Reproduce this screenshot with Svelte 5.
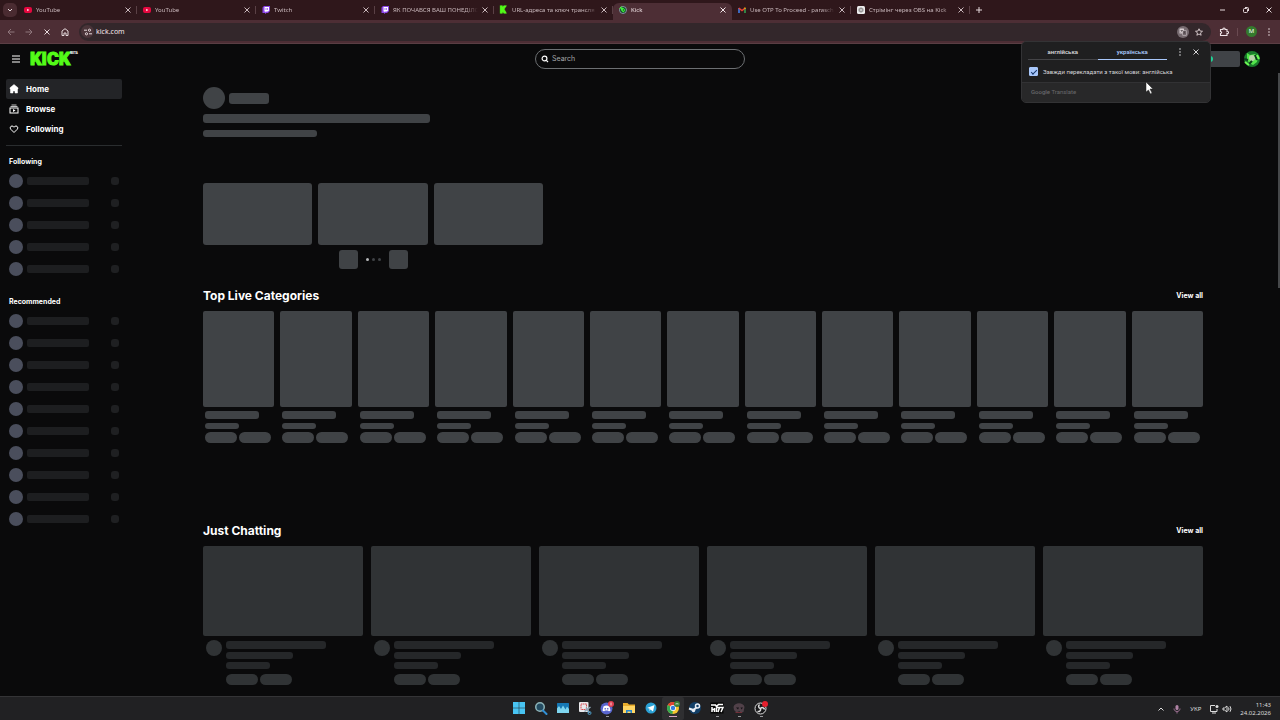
<!--
  Browser window on a desktop: tab strip, toolbar, the kick.com home page in
  its loading state, the translate bubble and the system taskbar.
-->
<script lang="ts">
	interface Tab {
		title: string;
		icon: string;
		active?: boolean;
	}

	const tabs: Tab[] = [
		{ title: 'YouTube', icon: 'youtube' },
		{ title: 'YouTube', icon: 'youtube' },
		{ title: 'Twitch', icon: 'twitch' },
		{ title: 'ЯК ПОЧАВСЯ ВАШ ПОНЕДІЛО', icon: 'twitch' },
		{ title: 'URL-адреса та ключ трансля', icon: 'k' },
		{ title: 'Kick', icon: 'kick', active: true },
		{ title: 'Use OTP To Proceed - parasch', icon: 'gmail' },
		{ title: 'Стрімінг через OBS на Kick', icon: 'gpt' }
	];

	const nav = ['Home', 'Browse', 'Following'];
	const channels = [
		{ label: 'Following', rows: 5 },
		{ label: 'Recommended', rows: 10 }
	];
	const apps = [
		'start', 'search', 'monitor', 'snip', 'discord', 'files',
		'telegram', 'chrome', 'steam', 'game', 'mask', 'obs'
	];
	const running = ['discord', 'game', 'mask', 'obs'];

	let url = $state('kick.com');
	let query = $state('');
	let always = $state(true);
</script>

{#snippet cross()}
	<svg class="i6" viewBox="0 0 6 6" aria-hidden="true"><path class="line" d="M.5.5l5 5M5.500.5l-5 5" /></svg>
{/snippet}

{#snippet favicon(name: string)}
	{#if name === 'k'}
		<span class="fav-k" aria-hidden="true">K</span>
	{:else}
		<svg class="i8" viewBox="0 0 16 16" aria-hidden="true">
			{#if name === 'youtube'}
				<rect y="2" width="16" height="12" rx="4" fill="#e5083f" />
				<path d="M6.5 5.5v5l4-2.5z" fill="#fff" />
			{:else if name === 'twitch'}
				<path d="M4 0h12v10l-4 4H9l-3 2v-2H1V3z" fill="#8b45e8" />
				<path d="M5 2h9v7l-2 2H9l-2 2v-2H5z" fill="#fff" />
				<path d="M8 4v4M11 4v4" stroke="#8b45e8" stroke-width="1.4" />
			{:else if name === 'kick'}
				<circle cx="8" cy="8" r="7" fill="#123b24" stroke="#a5bfd6" stroke-width="1.4" />
				<path d="M2 2l7 2 4 4-4 5-4-3z" fill="#3df23b" />
				<circle cx="9" cy="8" r="1.500" fill="#124a24" />
				<path d="M1 5l4-4" stroke="#56fb3c" stroke-width="2" />
			{:else if name === 'gmail'}
				<path d="M2 14V4" stroke="#4285f4" stroke-width="3" />
				<path d="M14 14V4" stroke="#34a853" stroke-width="3" />
				<path d="M1.500 4L8 9l6.500-5" fill="none" stroke="#ea4335" stroke-width="3" />
				<path d="M13 5l2-1.500" stroke="#fbbc04" stroke-width="3" />
			{:else}
				<rect width="16" height="16" rx="3" fill="#ececec" />
				<g fill="none" stroke="#8a8a8a" stroke-width="1.300">
					<ellipse cx="8" cy="8" rx="2.500" ry="5" />
					<ellipse cx="8" cy="8" rx="2.500" ry="5" transform="rotate(60 8 8)" />
					<ellipse cx="8" cy="8" rx="2.500" ry="5" transform="rotate(120 8 8)" />
				</g>
			{/if}
		</svg>
	{/if}
{/snippet}

{#snippet navIcon(name: string)}
	<svg class="i10" viewBox="0 0 20 20" aria-hidden="true">
		{#if name === 'Home'}
			<path d="M10 1l8 6.500V10h-1v8h-5v-4H8v4H3v-8H2V7.500z" fill="#fff" stroke="#fff" stroke-linejoin="round" />
		{:else if name === 'Browse'}
			<path d="M5 2h10M3 5h14" stroke="#fff" stroke-width="1.500" />
			<rect x="2" y="8" width="16" height="10" fill="none" stroke="#fff" stroke-width="2" />
			<path d="M8 10v6l5-3z" fill="#fff" />
		{:else}
			<path d="M10 17L3.500 10.500C1 7.500 3 4 6 4c2 0 3.200 1 4 2.500C10.800 5 12 4 14 4c3 0 5 3.500 2.500 6.500z" fill="none" stroke="#fff" stroke-width="2" stroke-linejoin="round" />
		{/if}
	</svg>
{/snippet}

{#snippet appIcon(name: string)}
	<svg class="i14" viewBox="0 0 28 28" aria-hidden="true">
		{#if name === 'start'}
			<path d="M2 2h11.500v11.500H2zM14.500 2H26v11.500H14.500zM2 14.500h11.500V26H2zM14.500 14.500H26V26H14.500z" fill="#48c4f3" />
		{:else if name === 'search'}
			<circle cx="12" cy="12" r="8.500" fill="#244c62" stroke="#8db4b9" stroke-width="3" />
			<path d="M18 19l7 7" stroke="#318fd4" stroke-width="4" stroke-linecap="round" />
		{:else if name === 'monitor'}
			<rect x="2" y="4" width="24" height="20" rx="1" fill="#1678b4" />
			<path d="M2 20V15l4-5 4 6 4-7 5 8 3-6 4 5v8H2z" fill="#7ed5ef" />
		{:else if name === 'snip'}
			<rect x="2" y="2" width="19" height="20" rx="2" fill="#e9e9ec" />
			<rect x="6" y="6" width="11" height="11" fill="none" stroke="#d64a52" stroke-width="2" stroke-dasharray="3 1" />
			<path d="M13 21l12-9M16 13l7 11" stroke="#90a7b7" stroke-width="3" />
			<circle cx="23" cy="24" r="3" fill="none" stroke="#4c9ac5" stroke-width="2" />
		{:else if name === 'discord'}
			<circle cx="13" cy="15" r="12" fill="#5966cf" />
			<path d="M7 11c4-3 8-3 12 0l2 8c-2 2-4 2-5 0h-6c-1 2-3 2-5 0z" fill="#fff" />
			<circle cx="10.500" cy="15.500" r="1.700" fill="#5966cf" />
			<circle cx="15.500" cy="15.500" r="1.700" fill="#5966cf" />
			<circle cx="22" cy="6" r="6" fill="#de3d50" />
			<path d="M22 3v6" stroke="#fff" stroke-width="1.500" />
		{:else if name === 'files'}
			<path d="M2 4h9l3 3h12v17H2z" fill="#e9ad2c" />
			<path d="M2 10h24v14H2z" fill="#ffd664" />
			<path d="M8 24v-6h12v6h-3v-3h-6v3z" fill="#2888ce" />
		{:else if name === 'telegram'}
			<circle cx="14" cy="14" r="11" fill="#2aa1d5" />
			<path d="M6 14l15-6-3 13-5-4-2 3v-5z" fill="#fff" />
		{:else if name === 'chrome'}
			<circle cx="14" cy="14" r="12" fill="#f7c52d" />
			<path d="M14 14L3.500 8A12 12 0 0 1 25 9z" fill="#e14333" />
			<path d="M14 14L3.500 8A12 12 0 0 0 13 26z" fill="#35a853" />
			<circle cx="14" cy="14" r="6" fill="#fff" />
			<circle cx="14" cy="14" r="4.500" fill="#367fe0" />
			<circle cx="22" cy="6" r="6" fill="#3b7e37" />
			<path d="M20 8V4l2 2 2-2v4" fill="none" stroke="#dff0dd" />
		{:else if name === 'steam'}
			<circle cx="14" cy="14" r="12" fill="#123f67" />
			<path d="M2 15l9 3 8-7" fill="none" stroke="#e9eef5" stroke-width="4" />
			<circle cx="19" cy="10" r="4" fill="#123f67" stroke="#e9eef5" stroke-width="3" />
			<circle cx="11" cy="19" r="3.500" fill="#e9eef5" />
		{:else if name === 'game'}
			<rect x="1" y="3" width="26" height="22" fill="#050505" />
			<path d="M2 8h9l2 3 4-4h9M4 12v10M9 14v8M4 17h6M13 13v9M14 13h5l-3 9M20 13h6l-4 9" fill="none" stroke="#fff" stroke-width="3" />
		{:else if name === 'mask'}
			<path d="M3 12C5 2 23 2 25 12l-2 10-6 2-2-4-6 3-5-5z" fill="#514149" />
			<path d="M8 13h6l-2 4zM17 13h5l-3 4z" fill="#151216" />
			<path d="M7 23h13" stroke="#713039" stroke-width="2" />
		{:else}
			<circle cx="13" cy="15" r="11" fill="#171719" stroke="#ddd" stroke-width="2" />
			<path d="M13 15c-4-1-5-5-2-8M13 15c3-3 7-2 8 2M13 15c1 4-2 7-6 6" fill="none" stroke="#ddd" stroke-width="3" />
			<circle cx="22" cy="6" r="6" fill="#e51f2d" />
		{/if}
	</svg>
{/snippet}

{#snippet heading(title: string)}
	<header class="section-head">
		<h2>{title}</h2>
		<a href="#all">View all</a>
	</header>
{/snippet}

<div class="window">
	<div class="tabstrip">
		<button class="tab-search" aria-label="Search tabs">
			<svg class="i6" viewBox="0 0 6 6"><path class="line" d="M1 2l2 2 2-2" /></svg>
		</button>
		{#each tabs as tab}
			<div class="tab" class:active={tab.active}>
				{@render favicon(tab.icon)}
				<button class="tab-title">{tab.title}</button>
				<button class="icon-btn" aria-label="Close tab">{@render cross()}</button>
			</div>
		{/each}
		<button class="icon-btn new-tab" aria-label="New tab">
			<svg class="i6" viewBox="0 0 6 6"><path class="line" d="M3 0v6M0 3h6" /></svg>
		</button>
		<div class="win-controls">
			<button class="icon-btn" aria-label="Minimize">
				<svg class="i6" viewBox="0 0 6 6"><path class="line" d="M0 3h5" /></svg>
			</button>
			<button class="icon-btn" aria-label="Restore">
				<svg class="i6" viewBox="0 0 6 6">
					<rect class="line" x="0.500" y="1.500" width="4" height="4" rx="1" />
					<path class="line" d="M2 .5h2.500q1 0 1 1V4" />
				</svg>
			</button>
			<button class="icon-btn" aria-label="Close">{@render cross()}</button>
		</div>
	</div>

	<div class="toolbar">
		<button class="icon-btn tool dim" aria-label="Back">
			<svg class="i8" viewBox="0 0 8 8"><path class="line" d="M7.500 4H1M4 1L1 4l3 3" /></svg>
		</button>
		<button class="icon-btn tool dim" aria-label="Forward">
			<svg class="i8" viewBox="0 0 8 8"><path class="line" d="M.5 4H7M4 1l3 3-3 3" /></svg>
		</button>
		<button class="icon-btn tool" aria-label="Stop loading">{@render cross()}</button>
		<button class="icon-btn tool" aria-label="Home page">
			<svg class="i8" viewBox="0 0 8 8"><path class="line" d="M1 7.500V3l3-2.300L7 3v4.500H5V5H3v2.500z" /></svg>
		</button>
		<div class="omnibox">
			<button class="site-info" aria-label="Site information">
				<svg class="i8" viewBox="0 0 8 8">
					<path class="line" d="M0 2.200h3M5 5.800h3" />
					<circle class="line" cx="5.500" cy="2.200" r="1.100" />
					<circle class="line" cx="2.500" cy="5.800" r="1.100" />
				</svg>
			</button>
			<input class="url" aria-label="Address" bind:value={url} />
			<button class="translate" aria-label="Translate this page">
				<svg class="i8" viewBox="0 0 16 16">
					<rect x="1" y="1" width="9" height="10" rx="1" fill="#d7ced1" />
					<rect x="7" y="5" width="8" height="10" rx="1" fill="#766b70" stroke="#d7ced1" />
					<path d="M3 5h5M5.500 4v1c0 2-1 3-2 4M9 8h4M11 7v2l-2 3M10 9l3 3" fill="none" stroke="#3b3034" />
				</svg>
			</button>
			<button class="icon-btn star" aria-label="Bookmark">
				<svg class="i8" viewBox="0 0 16 16"><path d="M8 1.500l2 4.500 5 .5-4 3.300 1.300 4.700L8 12l-4.300 2.500L5 9.800 1 6.500 6 6z" fill="none" stroke="#e6dadd" stroke-width="1.700" /></svg>
			</button>
		</div>
		<div class="tool-end">
			<button class="icon-btn" aria-label="Extensions">
				<svg class="i10" viewBox="0 0 20 20"><path d="M3 5h5c-1-4 5-4 4 0h4v4c4-1 4 5 0 4v4H3v-4c3 0 3-4 0-4z" fill="none" stroke="#eee3e6" stroke-width="2.200" /></svg>
			</button>
			<span class="sep"></span>
			<button class="profile" aria-label="Profile">M</button>
			<button class="icon-btn" aria-label="Browser menu">
				<svg class="i8" viewBox="0 0 8 8" fill="currentColor"><circle cx="4" cy="1" r=".8" /><circle cx="4" cy="4" r=".8" /><circle cx="4" cy="7" r=".8" /></svg>
			</button>
		</div>
	</div>

	<div class="page">
		<header class="site-head">
			<div class="brand">
				<button class="icon-btn menu" aria-label="Menu">
					<svg class="i8" viewBox="0 0 8 8"><path d="M0 1h8M0 4h8M0 7h8" stroke="#fff" /></svg>
				</button>
				<a class="logo" href="#home">KICK<sup>BETA</sup></a>
			</div>
			<label class="search">
				<svg class="i8" viewBox="0 0 8 8" aria-hidden="true">
					<circle cx="3.500" cy="3.500" r="2.400" fill="none" stroke="#fff" stroke-width="1.200" />
					<path d="M5.300 5.300L7 7" stroke="#fff" stroke-width="1.200" />
				</svg>
				<input placeholder="Search" aria-label="Search" bind:value={query} />
			</label>
			<div class="account">
				<button class="wallet" aria-label="Wallet"><span></span></button>
				<button class="avatar" aria-label="Account">
					<svg class="i16" viewBox="0 0 16 16">
						<circle cx="8" cy="8" r="8" fill="#1a7d2c" />
						<path d="M3 2l3 2 5-1 3 3-1 5-4 3-4-2-2-4z" fill="#54e64b" />
						<circle cx="8" cy="7" r="3" fill="#b8d2a9" />
						<path d="M0 8l4 1M11 4l2 5M5 13l3-3" stroke="#0c3b1c" stroke-width="2" />
						<path d="M1 11l4 3M13 4l2 4" stroke="#6dfa54" stroke-width="2" />
					</svg>
				</button>
			</div>
		</header>

		<div class="body">
			<aside>
				<nav>
					{#each nav as item, i}
						<a href="#{item}" class:current={i === 0}>{@render navIcon(item)}{item}</a>
					{/each}
				</nav>
				{#each channels as group}
					<section class="channels">
						<h3>{group.label}</h3>
						{#each { length: group.rows } as _}
							<div class="channel"><i class="face"></i><i class="name"></i><i class="dot"></i></div>
						{/each}
					</section>
				{/each}
			</aside>

			<main>
				<section class="hero">
					<div class="streamer"><i class="bone face"></i><i class="bone name"></i></div>
					<i class="bone line-a"></i>
					<i class="bone line-b"></i>
					<div class="previews">
						{#each { length: 3 } as _}<i class="bone"></i>{/each}
					</div>
					<div class="pager">
						<button class="bone" aria-label="Previous"></button>
						<span class="dots"><i></i><i></i><i></i></span>
						<button class="bone" aria-label="Next"></button>
					</div>
				</section>

				<section class="categories">
					{@render heading('Top Live Categories')}
					<div class="category-grid">
						{#each { length: 13 } as _}
							<div class="category">
								<i class="bone cover"></i>
								<div class="meta">
									<i class="bone title"></i>
									<i class="bone sub"></i>
									<div class="pills"><i class="bone"></i><i class="bone"></i></div>
								</div>
							</div>
						{/each}
					</div>
				</section>

				<section class="streams">
					{@render heading('Just Chatting')}
					<div class="stream-grid">
						{#each { length: 6 } as _}
							<div class="stream">
								<i class="bone cover"></i>
								<div class="info">
									<i class="bone face"></i>
									<div class="meta">
										<i class="bone title"></i>
										<i class="bone user"></i>
										<i class="bone game"></i>
										<div class="pills"><i class="bone"></i><i class="bone"></i></div>
									</div>
								</div>
							</div>
						{/each}
					</div>
				</section>
			</main>
			<div class="scrollbar"></div>
		</div>
	</div>

	<footer class="taskbar">
		<div class="apps">
			{#each apps as app}
				<button
					class="app"
					class:running={running.includes(app)}
					class:focused={app === 'chrome'}
					aria-label={app}
				>
					{@render appIcon(app)}
				</button>
			{/each}
		</div>
		<div class="tray">
			<svg class="i6" viewBox="0 0 6 6" aria-hidden="true"><path class="line" d="M.5 4.500L3 2l2.500 2.500" /></svg>
			<svg class="i10 mic" viewBox="0 0 10 10" aria-hidden="true">
				<rect x="3.500" y="1" width="3" height="5" rx="1.500" fill="#b184a6" />
				<path class="line" d="M2 4.500c0 4 6 4 6 0M5 7.500V9.500" />
			</svg>
			<span>УКР</span>
			<div class="status">
				<svg class="i10" viewBox="0 0 10 10" aria-hidden="true">
					<path class="line" d="M6 1.500H1.500v6H8V5M3 9h4" />
					<circle cx="8" cy="2.500" r="1.500" fill="#ddd" />
				</svg>
				<svg class="i10" viewBox="0 0 10 10" aria-hidden="true">
					<path class="line" d="M1 4h1.500L5 2v6L2.500 6H1zM6.500 3.500q1 1.500 0 3M8 2.200q2 2.800 0 5.600" />
				</svg>
			</div>
			<time>11:43<br />24.02.2026</time>
		</div>
	</footer>

	<div class="bubble" role="dialog" aria-label="Translate">
		<div class="bubble-head">
			<div class="langs">
				<button>англійська</button>
				<button class="selected">українська</button>
			</div>
			<button class="icon-btn" aria-label="Translate options">
				<svg class="i8" viewBox="0 0 8 8" fill="currentColor"><circle cx="4" cy="1" r=".8" /><circle cx="4" cy="4" r=".8" /><circle cx="4" cy="7" r=".8" /></svg>
			</button>
			<button class="icon-btn" aria-label="Close translate">{@render cross()}</button>
		</div>
		<label class="always">
			<input type="checkbox" bind:checked={always} />
			Завжди перекладати з такої мови: англійська
		</label>
		<div class="bubble-foot"><b>Google</b> Translate</div>
	</div>

	<svg class="cursor" viewBox="0 0 10 14" aria-hidden="true">
		<path d="M1 1v10l2.500-2 2 4 1.500-1-2-4H8z" fill="#fff" stroke="#222" stroke-width=".5" />
	</svg>
</div>

<style>
	:global(body) {
		margin: 0;
		background: #0a0a0b;
	}

	.window {
		position: relative;
		display: flex;
		flex-direction: column;
		min-height: 100vh;
		overflow: hidden;
		font-family: 'Noto Sans', sans-serif;
		font-size: 6px;
		color: #e6dadd;
	}
	.window :where(*) {
		box-sizing: border-box;
	}

	button,
	input {
		margin: 0;
		padding: 0;
		border: 0;
		background: none;
		font: inherit;
		color: inherit;
		outline: none;
	}
	a {
		color: inherit;
		text-decoration: none;
	}
	h2,
	h3 {
		margin: 0;
	}
	svg {
		display: block;
		flex: none;
	}
	i {
		display: block;
		flex: none;
	}
	.line {
		fill: none;
		stroke: currentColor;
	}
	.i6 { width: 6px; height: 6px; }
	.i8 { width: 8px; height: 8px; }
	.i10 { width: 10px; height: 10px; }
	.i14 { width: 14px; height: 14px; }
	.i16 { width: 16px; height: 16px; }

	.icon-btn {
		display: grid;
		place-items: center;
		flex: none;
	}

	/* tab strip */
	.tabstrip {
		display: flex;
		align-items: stretch;
		height: 20px;
		padding-left: 3px;
		background: #2f171b;
	}
	.tab-search {
		display: grid;
		place-items: center;
		align-self: center;
		width: 14px;
		height: 14px;
		margin-right: 1px;
		border-radius: 5px;
		background: #4a2b31;
	}
	.tab {
		display: flex;
		align-items: center;
		gap: 4px;
		flex: 0 1 119px;
		min-width: 0;
		padding: 0 6px;
		background: linear-gradient(#5a4045, #5a4045) right center / 1px 8px no-repeat;
		color: #c9b8bc;
	}
	.tab.active {
		margin-top: 3px;
		padding-bottom: 3px;
		border-radius: 6px 6px 0 0;
		background: #4d2e35;
		color: #f3e6e9;
	}
	.tab-title {
		flex: 1;
		min-width: 0;
		overflow: hidden;
		white-space: nowrap;
		text-align: left;
		mask-image: linear-gradient(90deg, #000 85%, transparent);
	}
	.fav-k {
		width: 8px;
		font: 900 9px/10px Roboto, sans-serif;
		color: #53fc18;
		-webkit-text-stroke: 1px #53fc18;
	}
	.new-tab {
		width: 18px;
	}
	.win-controls {
		display: flex;
		gap: 17px;
		margin-left: auto;
		padding-right: 8px;
	}

	/* toolbar */
	.toolbar {
		display: flex;
		align-items: center;
		height: 24px;
		padding-left: 2px;
		border-bottom: 1px solid #5a3e44;
		background: #4d2e35;
	}
	.tool {
		width: 18px;
		height: 18px;
	}
	.dim {
		color: #8f767c;
	}
	.omnibox {
		display: flex;
		align-items: center;
		flex: 1;
		height: 18px;
		margin-left: 5px;
		padding: 0 8px 0 2px;
		border-radius: 9px;
		background: #33272b;
	}
	.site-info {
		display: grid;
		place-items: center;
		width: 13px;
		height: 13px;
		border-radius: 50%;
		background: #4a3439;
	}
	.url {
		flex: 1;
		min-width: 0;
		margin-left: 2px;
		font-size: 7px;
		color: #f3e6e9;
	}
	.translate {
		display: grid;
		place-items: center;
		width: 12px;
		height: 12px;
		border-radius: 50%;
		background: #766b70;
	}
	.star {
		margin-left: 6px;
	}
	.tool-end {
		display: flex;
		align-items: center;
		gap: 8px;
		padding: 0 7px 0 8px;
	}
	.sep {
		width: 1px;
		height: 8px;
		background: #6a4a51;
	}
	.profile {
		width: 11px;
		height: 11px;
		border-radius: 50%;
		background: #347a2d;
		line-height: 11px;
		color: #fff;
	}

	/* page */
	.page {
		flex: 1;
		display: flex;
		flex-direction: column;
		padding-bottom: 11px;
		background: #0a0a0b;
		font-family: Inter, sans-serif;
		color: #fff;
	}
	.site-head {
		display: grid;
		grid-template-columns: 1fr 210px 1fr;
		align-items: center;
		height: 29px;
	}
	.brand {
		display: flex;
		align-items: center;
		gap: 10px;
		padding-left: 12px;
	}
	.logo {
		display: flex;
		font: 900 18px/18px Roboto, sans-serif;
		color: #53fc18;
		-webkit-text-stroke: 1px #53fc18;
	}
	.logo sup {
		font-size: 3px;
		line-height: 6px;
		color: #fff;
		-webkit-text-stroke: 0;
	}
	.search {
		display: flex;
		align-items: center;
		gap: 3px;
		height: 20px;
		padding: 0 5px;
		border: 1px solid #6c6f72;
		border-radius: 10px;
	}
	.search input {
		flex: 1;
		min-width: 0;
		font-size: 7px;
	}
	.search input::placeholder {
		color: #a4a7aa;
		opacity: 1;
	}
	.account {
		display: flex;
		justify-content: flex-end;
		gap: 4px;
		padding-right: 20px;
	}
	.wallet {
		width: 33px;
		height: 16px;
		border-radius: 2px;
		background: #404347;
	}
	.wallet span {
		display: block;
		width: 6px;
		height: 6px;
		border-radius: 50%;
		background: #1fd195;
	}

	.body {
		flex: 1;
		display: flex;
		align-items: flex-start;
	}
	aside {
		width: 128px;
		flex: none;
		padding: 6px 6px 0;
	}
	nav {
		padding-bottom: 6px;
		border-bottom: 1px solid #2a2d2f;
	}
	nav a {
		display: flex;
		align-items: center;
		gap: 7px;
		height: 20px;
		padding: 0 3px;
		border-radius: 2px;
		font-size: 8px;
		font-weight: 700;
	}
	nav a.current {
		background: #232427;
	}
	.channels {
		padding: 6px 3px;
	}
	h3 {
		padding-top: 2px;
		font-size: 7px;
		font-weight: 700;
		line-height: 16px;
	}
	.channel {
		display: flex;
		align-items: center;
		gap: 4px;
		height: 22px;
	}
	.channel .face {
		width: 14px;
		height: 14px;
		border-radius: 50%;
		background: #4a4e5c;
	}
	.channel .name {
		width: 62px;
		height: 8px;
		border-radius: 2px;
		background: #1d1e20;
	}
	.channel .dot {
		width: 8px;
		height: 8px;
		margin-left: auto;
		border-radius: 3px;
		background: #1f2022;
	}

	main {
		flex: 1;
		min-width: 0;
		padding: 14px 75px 0;
	}
	.bone {
		border-radius: 3px;
		background: #404346;
	}
	.streamer {
		display: flex;
		align-items: center;
		gap: 4px;
	}
	.streamer .face {
		width: 22px;
		height: 22px;
		border-radius: 50%;
	}
	.streamer .name {
		width: 40px;
		height: 11px;
	}
	.line-a {
		width: 227px;
		height: 9px;
		margin-top: 5px;
	}
	.line-b {
		width: 114px;
		height: 7px;
		margin-top: 7px;
	}
	.previews {
		display: grid;
		grid-template-columns: repeat(3, 1fr);
		gap: 6px;
		width: 340px;
		margin-top: 46px;
	}
	.previews .bone {
		height: 62px;
	}
	.pager {
		display: flex;
		justify-content: center;
		align-items: center;
		gap: 8px;
		width: 340px;
		margin-top: 5px;
	}
	.pager button {
		width: 19px;
		height: 19px;
	}
	.dots {
		display: flex;
		gap: 3px;
	}
	.dots i {
		width: 3px;
		height: 3px;
		border-radius: 50%;
		background: #404346;
	}
	.dots i:first-child {
		background: #b6b8ba;
	}

	.section-head {
		display: flex;
		align-items: center;
		justify-content: space-between;
		height: 20px;
		margin-bottom: 6px;
	}
	h2 {
		font-size: 12px;
		font-weight: 700;
	}
	.section-head a {
		font-size: 7px;
		font-weight: 700;
	}
	.categories {
		margin-top: 16px;
	}
	.category-grid {
		display: grid;
		grid-template-columns: repeat(13, 1fr);
		gap: 6px;
	}
	.category .cover {
		height: 96px;
		border-radius: 2px;
	}
	.category .meta {
		padding: 4px 2px 0;
	}
	.category .title {
		width: 54px;
		height: 8px;
	}
	.category .sub {
		width: 34px;
		height: 6px;
		margin: 4px 0 3px;
	}
	.pills {
		display: flex;
		gap: 2px;
	}
	.pills .bone {
		width: 32px;
		height: 11px;
		border-radius: 6px;
	}

	.streams {
		margin-top: 77px;
	}
	.stream-grid {
		display: grid;
		grid-template-columns: repeat(6, 1fr);
		gap: 8px;
	}
	.stream .bone {
		background: #303335;
	}
	.stream .cover {
		height: 90px;
		border-radius: 2px;
	}
	.info {
		display: flex;
		gap: 4px;
		padding: 4px 3px 0;
	}
	.info .face {
		width: 16px;
		height: 16px;
		border-radius: 50%;
	}
	.info .meta {
		padding-top: 1px;
	}
	.info .meta > .bone {
		background: #252729;
	}
	.info .title {
		width: 100px;
		height: 8px;
	}
	.info .user {
		width: 67px;
		height: 7px;
		margin: 3px 0;
	}
	.info .game {
		width: 44px;
		height: 7px;
		margin-bottom: 5px;
	}
	.scrollbar {
		width: 2px;
		height: 215px;
		flex: none;
		background: #46484a;
	}

	/* taskbar */
	.taskbar {
		display: grid;
		grid-template-columns: 1fr auto 1fr;
		height: 24px;
		border-top: 1px solid #343436;
		background: #212123;
		color: #ddd;
	}
	.apps {
		display: flex;
		grid-column: 2;
	}
	.app {
		display: flex;
		flex-direction: column;
		align-items: center;
		gap: 1px;
		width: 22px;
		padding-top: 4px;
	}
	.running::after {
		content: '';
		width: 3px;
		height: 1px;
		background: #98989c;
	}
	.focused {
		border-radius: 2px;
		background: #2f2f31;
	}
	.focused::after {
		content: '';
		width: 8px;
		height: 1px;
		background: #d8a4c4;
	}
	.tray {
		display: flex;
		justify-content: flex-end;
		align-items: center;
		gap: 8px;
		padding-right: 9px;
	}
	.mic {
		color: #9b6f91;
	}
	.status {
		display: flex;
		gap: 3px;
	}
	time {
		line-height: 8px;
		text-align: right;
	}

	/* translate bubble, hangs from the omnibox over the page */
	.bubble {
		position: absolute;
		top: 41px;
		right: 69px;
		width: 190px;
		overflow: hidden;
		border: 1px solid #333335;
		border-radius: 5px;
		background: #1f1f20;
		color: #d5d5d8;
		font-family: Roboto, sans-serif;
	}
	.bubble-head {
		display: flex;
		gap: 9px;
		height: 18px;
		padding: 0 11px 0 6px;
	}
	.langs {
		display: flex;
		flex: 1;
	}
	.langs button {
		flex: 1;
		padding-top: 2px;
		border-bottom: 1px solid #444447;
		font-weight: 600;
	}
	.langs .selected {
		border-color: #a8c7fa;
		color: #a8c7fa;
	}
	.bubble-head .icon-btn {
		padding-top: 2px;
	}
	.always {
		display: flex;
		align-items: center;
		gap: 5px;
		height: 22px;
		padding: 1px 7px 0;
		white-space: nowrap;
	}
	.always input {
		appearance: none;
		flex: none;
		display: grid;
		place-items: center;
		width: 9px;
		height: 9px;
		border: 1px solid #a8c7fa;
		border-radius: 1px;
	}
	.always input:checked {
		background: #a8c7fa;
	}
	.always input:checked::after {
		content: '';
		width: 5px;
		height: 2px;
		border: solid #123368;
		border-width: 0 0 1px 1px;
		transform: rotate(-45deg);
	}
	.bubble-foot {
		height: 20px;
		padding-left: 9px;
		border-top: 1px solid #323234;
		background: #282829;
		line-height: 18px;
		color: #69696c;
	}
	.bubble-foot b {
		font-weight: 500;
	}

	.cursor {
		position: absolute;
		top: 81px;
		right: 125px;
		width: 10px;
		height: 14px;
	}
</style>
